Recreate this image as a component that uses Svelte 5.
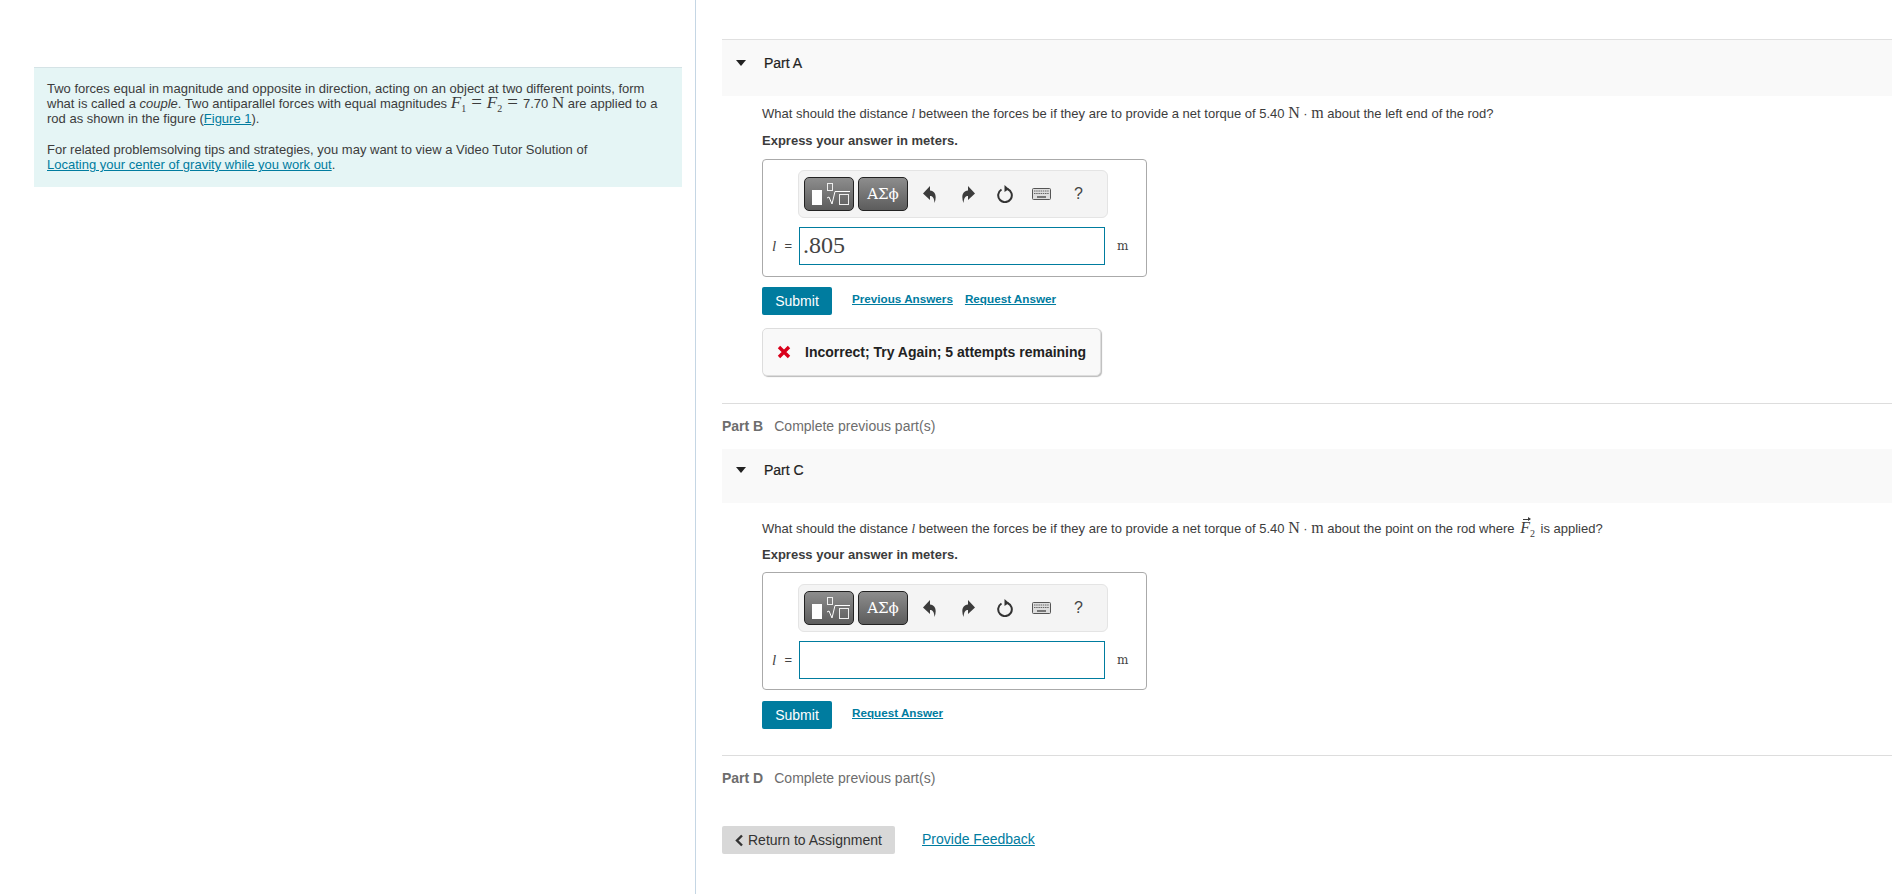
<script>
	const parts = [
		{
			name: 'Part A',
			after: 'about the left end of the rod?',
			value: '.805',
			previous: true,
			feedback: 'Incorrect; Try Again; 5 attempts remaining'
		},
		{
			name: 'Part C',
			after: 'about the point on the rod where',
			value: '',
			previous: false,
			feedback: ''
		}
	];
</script>

{#snippet toolbar()}
	<div class="toolbar">
		<button class="tpl active" aria-label="Templates">
			<svg width="48" height="32" viewBox="0 0 48 32">
				<rect x="7" y="12" width="10" height="15" fill="#fff" />
				<rect x="22.500" y="5.500" width="5" height="7" fill="none" stroke="#eee" />
				<path d="M22 20l2-1 3 7 3-12.500h15" fill="none" stroke="#fff" stroke-width="1" />
				<rect x="34.500" y="16.500" width="9" height="10" fill="none" stroke="#eee" />
			</svg>
		</button>
		<button class="tpl greek">ΑΣϕ</button>
		<svg class="tool undo" width="13" height="17" viewBox="0 0 13 17">
			<path d="M7 0L0 7.500 7 14v-4c2.500 0 4 1.500 4.500 7 2-5 2-12-4.500-12.500z" fill="#3c3c3c" />
		</svg>
		<svg class="tool redo" width="13" height="17" viewBox="0 0 13 17">
			<path d="M6 0l7 7.500L6 14v-4c-2.500 0-4 1.500-4.500 7-2-5-2-12 4.500-12.500z" fill="#3c3c3c" />
		</svg>
		<svg class="tool reset" width="16" height="18" viewBox="0 0 16 18">
			<path d="M10.500 4a6.800 6.800 0 1 1-6 .5" fill="none" stroke="#333" stroke-width="2" />
			<path d="M7.500 0l4.500 4-4.500 3z" fill="#333" />
		</svg>
		<svg class="tool keys" width="19" height="12" viewBox="0 0 19 12">
			<rect x=".5" y=".5" width="18" height="11" rx="1" fill="#ddd" stroke="#555" />
			<path d="M2 3h15M2 5.500h15" stroke="#666" stroke-dasharray="1.500 .7" />
			<path d="M5 9h9" stroke="#555" stroke-width="1.500" />
		</svg>
		<span class="help">?</span>
	</div>
{/snippet}

{#snippet part(p)}
	<div class="head">
		<span class="caret"></span>
		<span class="head-name">{p.name}</span>
	</div>
	<div class="body">
		<p class="question">
			What should the distance <i class="m">l</i> between the forces be if they are to provide a net torque of 5.40
			<span class="m big">N</span> · <span class="m big">m</span>
			{p.after}
			{#if p.name === 'Part C'}
				<span class="vec"><i class="m big">F</i><sub class="m">2</sub></span> is applied?
			{/if}
		</p>
		<p class="express">Express your answer in meters.</p>
		<div class="answer">
			{@render toolbar()}
			<div class="entry">
				<span class="lhs"><i>l</i><span class="eq">=</span></span>
				<div class="field">{p.value}</div>
				<span class="unit">m</span>
			</div>
		</div>
		<div class="actions">
			<button class="submit">Submit</button>
			<div class="action-links">
				{#if p.previous}<a href="#prev">Previous Answers</a>{/if}
				<a href="#req">Request Answer</a>
			</div>
		</div>
		{#if p.feedback}
			<div class="feedback">
				<svg width="14" height="14" viewBox="0 0 14 14">
					<path d="M2 2l10 10M12 2L2 12" stroke="#d9001b" stroke-width="3.400" />
				</svg>
				<span>{p.feedback}</span>
			</div>
		{/if}
	</div>
{/snippet}

{#snippet locked(name)}
	<div class="locked"><b>{name}</b><span>Complete previous part(s)</span></div>
{/snippet}

<div class="page">
	<aside class="left">
		<div class="intro">
			<p>
				Two forces equal in magnitude and opposite in direction, acting on an object at two different points, form
				what is called a <i>couple</i>. Two antiparallel forces with equal magnitudes
				<i class="m big">F</i><sub class="m">1</sub><span class="m big rel">=</span><i class="m big">F</i><sub class="m">2</sub><span class="m big rel">=</span>7.70 <span class="m big">N</span>
				are applied to a rod as shown in the figure (<a href="#fig">Figure 1</a>).
			</p>
			<p>
				For related problemsolving tips and strategies, you may want to view a Video Tutor Solution of<br />
				<a href="#video">Locating your center of gravity while you work out</a>.
			</p>
		</div>
	</aside>
	<main class="right">
		<section class="part-a">{@render part(parts[0])}</section>
		<div class="rule"></div>
		{@render locked('Part B')}
		<section class="part-c">{@render part(parts[1])}</section>
		<div class="rule rule-d"></div>
		{@render locked('Part D')}
		<div class="footer">
			<button class="return">
				<svg width="9" height="13" viewBox="0 0 9 13"><path d="M7 1.500L2 6.500l5 5" fill="none" stroke="#333" stroke-width="2.400" /></svg>
				Return to Assignment
			</button>
			<a class="provide" href="#feedback">Provide Feedback</a>
		</div>
	</main>
</div>

<style>
	:global(body) {
		margin: 0;
		background: #fff;
	}

	.page {
		display: grid;
		grid-template-columns: 696px 1fr;
		min-height: 894px;
		font-family: 'Liberation Sans', Arial, sans-serif;
		font-size: 13px;
		color: #3c3c3c;
	}

	a {
		color: #007c9f;
		text-decoration: underline;
	}

	button {
		font-family: inherit;
		border: none;
		padding: 0;
	}

	.m {
		font-family: 'Liberation Serif', serif;
	}

	.big {
		font-size: 16px;
		line-height: 0;
	}

	.intro .big {
		font-size: 17px;
	}

	.intro .rel {
		font-size: 19px;
		margin: 0 5px;
	}

	sub.m {
		font-size: 10px;
		line-height: 0;
	}

	.left {
		border-right: 1px solid #c5d6e4;
		padding: 67px 13px 0 34px;
	}

	.intro {
		background: #e5f5f5;
		border-top: 1px solid #d5e3e6;
		padding: 13px 10px 14px 13px;
		line-height: 15px;
		height: 92px;
	}

	.intro p {
		margin: 0 0 16px;
	}

	.right {
		padding: 39px 0 0 26px;
	}

	.head {
		display: flex;
		align-items: flex-start;
		gap: 18px;
		height: 57px;
		background: #f9f9f9;
		border-top: 1px solid #e0e0e0;
		padding: 15px 0 0 14px;
		box-sizing: border-box;
		font-size: 14px;
		color: #222;
	}

	.part-c .head {
		height: 54px;
		padding-top: 13px;
		border-top: none;
	}

	.caret {
		width: 0;
		height: 0;
		margin-top: 5px;
		border-left: 5px solid transparent;
		border-right: 5px solid transparent;
		border-top: 6px solid #222;
	}

	.head-name {
		-webkit-text-stroke: 0.2px #222;
	}

	.body {
		padding-left: 40px;
	}

	.question {
		margin: 0;
		padding-top: 10px;
		height: 26px;
		line-height: 16px;
	}

	.part-c .question {
		padding-top: 18px;
		height: 25px;
	}

	.vec {
		position: relative;
		margin: 0 2px;
	}

	.vec::before {
		content: '';
		position: absolute;
		left: 3px;
		width: 7px;
		top: -2px;
		border-top: 1px solid #3c3c3c;
	}

	.vec::after {
		content: '';
		position: absolute;
		left: 8px;
		top: -4px;
		border-left: 3px solid #3c3c3c;
		border-top: 2.500px solid transparent;
		border-bottom: 2.500px solid transparent;
	}

	.express {
		margin: 0;
		font-weight: 700;
		line-height: 18px;
		height: 27px;
	}

	.part-c .express {
		height: 26px;
	}

	.answer {
		width: 385px;
		box-sizing: border-box;
		border: 1px solid #aaa;
		border-radius: 4px;
		padding: 10px 0 11px 35px;
		height: 118px;
	}

	.part-c .answer {
		padding-top: 11px;
	}

	.toolbar {
		display: flex;
		align-items: center;
		width: 310px;
		height: 48px;
		box-sizing: border-box;
		background: #f4f4f4;
		border: 1px solid #e4e4e4;
		border-radius: 6px;
		padding-left: 5px;
	}

	.tpl {
		width: 50px;
		height: 34px;
		border-radius: 5px;
		border: 1px solid #222;
		background: linear-gradient(#8d8d8d, #5c5c5c);
		display: flex;
		align-items: center;
		justify-content: center;
		margin-right: 4px;
		color: #fff;
	}

	.greek {
		font-family: 'DejaVu Serif', 'Liberation Serif', serif;
		font-size: 15px;
		margin-top: -1px;
	}

	.tool {
		flex: none;
	}

	.undo {
		margin-left: 11px;
	}

	.redo {
		margin-left: 26px;
	}

	.reset {
		margin-left: 22px;
	}

	.keys {
		margin-left: 19px;
	}

	.help {
		margin-left: 23px;
		font-size: 16px;
		color: #444;
	}

	.entry {
		display: flex;
		align-items: center;
		margin-top: 9px;
		margin-left: -35px;
	}

	.lhs {
		display: flex;
		justify-content: space-between;
		width: 36px;
		box-sizing: border-box;
		padding: 0 7px 0 9px;
		color: #444;
		font-family: 'Liberation Serif', serif;
		font-size: 15px;
	}

	.eq {
		font-family: 'Liberation Sans', sans-serif;
		font-size: 13px;
	}

	.field {
		width: 306px;
		height: 38px;
		box-sizing: border-box;
		border: 1px solid #007c9f;
		font-family: 'Liberation Serif', serif;
		font-size: 24px;
		line-height: 34px;
		padding-left: 3px;
		color: #444;
	}

	.unit {
		margin-left: 12px;
		font-family: 'DejaVu Serif', serif;
		font-size: 12px;
		color: #444;
	}

	.actions {
		display: flex;
		margin-top: 10px;
	}

	.part-c .actions {
		margin-top: 11px;
	}

	.submit {
		width: 70px;
		height: 28px;
		background: #007c9f;
		color: #fff;
		font-size: 14px;
		border-radius: 2px;
	}

	.action-links {
		display: flex;
		gap: 12px;
		margin-left: 20px;
		font-weight: 700;
		font-size: 11.7px;
		line-height: 16px;
		padding-top: 4px;
	}

	.feedback {
		display: flex;
		align-items: center;
		gap: 14px;
		width: 339px;
		height: 48px;
		box-sizing: border-box;
		margin-top: 13px;
		padding-left: 14px;
		background: #f9f9f9;
		border: 1px solid #ddd;
		border-radius: 5px;
		box-shadow: 1px 1px 1px #bbb;
		font-weight: 700;
		font-size: 14px;
		color: #222;
	}

	.rule {
		border-top: 1px solid #ddd;
		margin-top: 27px;
	}

	.rule-d {
		margin-top: 26px;
	}

	.locked {
		height: 45px;
		padding-top: 14px;
		box-sizing: border-box;
		font-size: 14px;
		color: #6d6d6d;
	}

	.locked b {
		margin-right: 11px;
	}

	.footer {
		display: flex;
		align-items: center;
		margin-top: 25px;
		gap: 27px;
		font-size: 14px;
	}

	.provide {
		margin-bottom: 2px;
	}

	.return {
		display: flex;
		align-items: center;
		gap: 4px;
		width: 173px;
		height: 28px;
		padding-left: 13px;
		background: #d8d8d8;
		border-radius: 2px;
		font-size: 14px;
		color: #333;
	}
</style>
